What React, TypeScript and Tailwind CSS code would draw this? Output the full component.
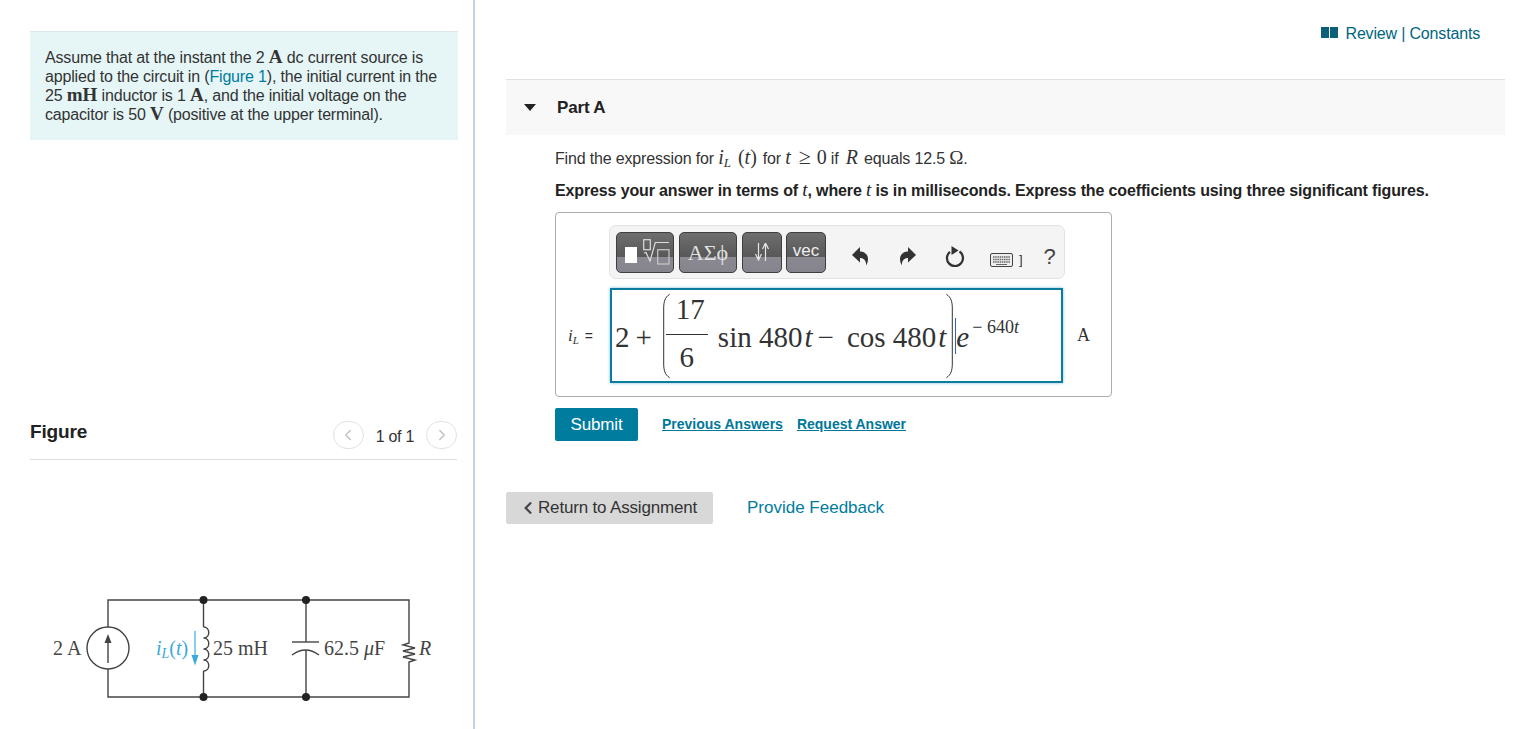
import React from 'react';
import { FaChevronLeft } from 'react-icons/fa';
import { ChevronLeft, ChevronRight } from 'lucide-react';

const M = ({ children, b }: { children: React.ReactNode; b?: boolean }) => (
  <span className={`font-['Liberation_Serif',serif] text-[19px] leading-[0] tracking-normal ${b ? 'font-bold' : ''}`}>{children}</span>
);

const I = ({ children, className }: { children: React.ReactNode; className?: string }) => (
  <span className={`font-['Liberation_Serif',serif] text-[20px] italic leading-[0] tracking-normal ${className ?? ''}`}>{children}</span>
);

function Circuit() {
  const ink = '#444';
  const serif = "'Liberation Serif', serif";
  return (
    <svg viewBox="0 0 420 130" width={420} height={130} className="block tracking-normal">
      <path d="M78 47V20H379V63l-6 2l12 3l-12 3l12 3l-12 3l12 3l-6 2V117H78V89" fill="none" stroke={ink} strokeWidth="1.400" />
      <circle cx="78" cy="68" r="21" fill="#fff" stroke={ink} strokeWidth="1.400" />
      <path d="M78 83V59" stroke={ink} strokeWidth="1.400" />
      <path d="M78 54L74.500 63H81.500Z" fill={ink} />
      <path d="M173.500 20V47M173.500 91V117" stroke={ink} strokeWidth="1.400" />
      <path d="M173.500 47c7 0 7 11 0 11c7 0 7 11 0 11c7 0 7 11 0 11c7 0 7 11 0 11" fill="none" stroke={ink} strokeWidth="1.400" />
      <path d="M276 20V62M276 70V117" stroke={ink} strokeWidth="1.400" />
      <path d="M262 62H289" stroke={ink} strokeWidth="1.400" />
      <path d="M262 75Q275.500 65 289 75" fill="none" stroke={ink} strokeWidth="1.400" />
      <circle cx="173.500" cy="20" r="4" fill="#222" />
      <circle cx="276" cy="20" r="4" fill="#222" />
      <circle cx="173.500" cy="117" r="4" fill="#222" />
      <circle cx="276" cy="117" r="4" fill="#222" />
      <path d="M165 51V77" stroke="#3aa9dc" strokeWidth="1.200" />
      <path d="M165 85.500L161.500 75H168.500Z" fill="#3aa9dc" />
      <g fontFamily={serif} fontSize="20" fill={ink}>
        <text x="23" y="75">2 A</text>
        <text x="183" y="75">25 mH</text>
        <text x="294" y="75">62.5 <tspan fontStyle="italic">μ</tspan>F</text>
        <text x="389" y="75" fontStyle="italic">R</text>
      </g>
      <text x="126" y="75" fontFamily={serif} fontSize="20" fontStyle="italic" fill="#3aa9dc">
        i<tspan fontSize="14" dy="3">L</tspan><tspan dy="-3" fontStyle="normal">(</tspan>t<tspan fontStyle="normal">)</tspan>
      </text>
    </svg>
  );
}

function ToolButton({ w, children }: { w: string; children: React.ReactNode }) {
  return (
    <div className={`${w} relative flex h-[41px] items-center justify-center overflow-hidden rounded-[5px] border border-[#3f3f3f] bg-[linear-gradient(#6e6e6e_0,#585858_61%,#8b8a92_62%,#85848c_100%)]`}>
      {children}
    </div>
  );
}

function Paren({ flip }: { flip?: boolean }) {
  return (
    <svg viewBox="0 0 7 84" width={7} height={84} className={`shrink-0 ${flip ? '-scale-x-100' : ''}`}>
      <path d="M6.500 .5C2 3 .7 8 .7 14V70C.7 76 2 81 6.500 83.500" fill="none" stroke="#333" strokeWidth="1" />
    </svg>
  );
}

function ArrowIcon({ flip }: { flip?: boolean }) {
  return (
    <svg viewBox="0 0 16 19" width={16} height={19} className={`shrink-0 ${flip ? '-scale-x-100' : ''}`}>
      <path d="M0 8L8 0V4.500C13 4.500 16 8 16 12C16 15 15 17 14 18.500C14.500 14 12 11 8 11V15.500Z" fill="#333" />
    </svg>
  );
}

export default function App() {
  return (
    <div className="flex h-[729px] w-[1524px] overflow-hidden bg-white font-['Liberation_Sans',Arial,sans-serif] text-[16px] tracking-[-0.17px] text-[#333]">
      {/* left panel */}
      <div className="h-full w-[475px] shrink-0 border-r-2 border-[#c3d2e2] pl-[30px] pr-[15px] pt-[31px]">
        <div className="h-[109px] whitespace-nowrap border-t border-[#dce5ea] bg-[#e6f6f7] pl-[15px] pt-[16px] text-[16px] leading-[19px]">
          Assume that at the instant the 2 <M b>A</M> dc current source is<br />
          applied to the circuit in (<span className="text-[#007c9e]">Figure 1</span>), the initial current in the<br />
          25 <M b>mH</M> inductor is 1 <M b>A</M>, and the initial voltage on the<br />
          capacitor is 50 <M b>V</M> (positive at the upper terminal).
        </div>

        <div className="mt-[262px] flex h-[58px] w-[427px] items-center justify-between border-b border-[#ddd] pt-[9px]">
          <span className="-mt-[6px] text-[19px] font-bold text-[#222]">Figure</span>
          <div className="flex items-center text-[16px]">
            <span className="flex h-[28px] w-[31px] items-center justify-center rounded-full border border-[#e2e2e2] text-[#c2c2c2]">
              <ChevronLeft size={18} />
            </span>
            <span className="mx-[12px] mt-[4px] tracking-[-0.3px]">1 of 1</span>
            <span className="flex h-[28px] w-[31px] items-center justify-center rounded-full border border-[#e2e2e2] text-[#c2c2c2]">
              <ChevronRight size={18} />
            </span>
          </div>
        </div>

        <div className="mt-[120px]">
          <Circuit />
        </div>
      </div>

      {/* right panel */}
      <div className="ml-[31px] w-[999px] shrink-0">
        <div className="flex h-[79px] items-start justify-end pr-[25px] pt-[24px] leading-[19px] text-[#00667f]">
          <svg viewBox="0 0 17 11" width={17} height={11} className="mr-[8px] mt-[3px]">
            <path d="M0 0H8V11H0ZM9 0H17V11H9Z" fill="#0b5f78" />
          </svg>
          Review | Constants
        </div>

        <div className="flex h-[56px] items-center border-t border-[#e0e0e0] bg-[#f8f8f8] text-[#222]">
          <span className="ml-[18px] h-0 w-0 border-x-[6.500px] border-t-[7px] border-x-transparent border-t-[#222]" />
          <span className="ml-[21px] text-[17px] font-bold">Part A</span>
        </div>

        <div className="pl-[49px]">
          <div className="mt-[12px] h-[24px] whitespace-nowrap leading-[24px]">
            Find the expression for <I>i<sub className="text-[13px]">L</sub></I>
            <span className="ml-[7px] font-['Liberation_Serif',serif] text-[20px] leading-[0] tracking-normal">(<i>t</i>)</span>
            <span className="ml-[6px]">for</span> <I>t</I>
            <span className="ml-[8px] font-['Liberation_Serif',serif] text-[22px] leading-[0]">≥</span>
            <span className="ml-[6px] font-['Liberation_Serif',serif] text-[20px] leading-[0]">0</span> if <I className="ml-[3px]">R</I>
            <span className="ml-[6px]">equals 12.5</span> <M>Ω</M>.
          </div>
          <div className="mt-[8px] h-[24px] whitespace-nowrap font-bold leading-[24px] tracking-[-0.135px] text-[#222]">
            Express your answer in terms of <span className="font-['Liberation_Serif',serif] text-[19px] font-normal italic leading-[0]">t</span>, where <span className="font-['Liberation_Serif',serif] text-[19px] font-normal italic leading-[0]">t</span> is in milliseconds. Express the coefficients using three significant figures.
          </div>

          {/* answer box */}
          <div className="mt-[9px] h-[185px] w-[557px] rounded-[4px] border border-[#acacac] pl-[53px] pt-[12px]">
            <div className="flex h-[54px] w-[456px] items-center rounded-[7px] border border-[#e2e2e2] bg-[#f4f4f4] pl-[6px]">
              <div className="flex gap-[5px]">
                <ToolButton w="w-[58px]">
                  <span className="absolute left-[8px] top-[14px] h-[16px] w-[12px] bg-white" />
                  <svg viewBox="0 0 27 26" width={27} height={26} className="absolute left-[26px] top-[6px]" fill="none" stroke="#dcdcdc" strokeWidth="1.200">
                    <rect x=".7" y=".7" width="6.600" height="10" />
                    <path d="M1 14L3 13.500L7 22L12.300 3.500H26" />
                    <rect x="14.700" y="10.700" width="11.300" height="14.300" stroke="#c8c8c8" />
                  </svg>
                </ToolButton>
                <ToolButton w="w-[58px]">
                  <span className="font-['Liberation_Serif',serif] text-[22px] tracking-normal text-[#e0e0e0]">ΑΣϕ</span>
                </ToolButton>
                <ToolButton w="w-[40px]">
                  <svg viewBox="0 0 16 18" width={16} height={18} fill="none" stroke="#e4e4e4" strokeWidth="1.200">
                    <path d="M4.500 0V16M1.500 11L4.500 17L7.500 11M11.500 18V2M8.500 6L11.500 0L14.500 6" />
                  </svg>
                </ToolButton>
                <div className="-ml-[1px]">
                  <ToolButton w="w-[40px]">
                    <span className="-mt-[3px] text-[17px] tracking-normal text-[#eee]">vec</span>
                  </ToolButton>
                </div>
              </div>
              <div className="ml-[26px] mt-[9px]"><ArrowIcon /></div>
              <div className="ml-[32px] mt-[9px]"><ArrowIcon flip /></div>
              <svg viewBox="0 0 20 21" width={20} height={21} className="ml-[29px] mt-[9px]" fill="none">
                <path d="M14.500 5.500A8 8 0 1 1 5 5.800" stroke="#333" strokeWidth="2.300" />
                <path d="M6.500 0L13.500 4.500L6.500 9Z" fill="#333" />
              </svg>
              <svg viewBox="0 0 23 14" width={23} height={14} className="ml-[25px] mt-[15px]" fill="none">
                <rect x=".5" y=".5" width="22" height="13" rx="1.500" fill="#eee" stroke="#444" />
                <path d="M3 4h17M3 6.500h17M3 9h17" stroke="#666" strokeWidth="1.300" strokeDasharray="1.500 .7" />
                <path d="M6 11.500h11" stroke="#666" />
              </svg>
              <span className="ml-[6px] mt-[15px] text-[13px] leading-none">]</span>
              <span className="ml-[21px] mt-[9px] text-[22px] leading-none text-[#444]">?</span>
            </div>

            <div className="-ml-[41px] mt-[9px] flex w-[535px] items-center tracking-normal">
              <div className="w-[42px] shrink-0 whitespace-nowrap text-[14px] text-[#333]">
                <span className="font-['Liberation_Serif',serif] text-[17px] italic">i<sub className="text-[11px]">L</sub></span>
                <span className="ml-[6px]">=</span>
              </div>
              <div className="flex h-[95px] w-[453px] shrink-0 items-center whitespace-nowrap border-2 border-[#0b7c9e] pl-[3px] font-['Liberation_Serif',serif] text-[29px] text-[#333] shadow-[0_0_3px_#7fc0d4]">
                <span className="mt-[5px]">2</span>
                <span className="ml-[6px] mt-[5px]">+</span>
                <span className="ml-[11px]"><Paren /></span>
                <div className="-ml-[4px] -mt-[2px] flex w-[42px] flex-col text-center">
                  <span className="h-[45px] border-b border-[#333] pl-[7px] leading-[38px]">17</span>
                  <span className="h-[45px] leading-[44px]">6</span>
                </div>
                <span className="ml-[10px] mt-[5px]">sin 480<i className="mx-[2px]">t</i></span>
                <span className="ml-[3px] mt-[5px]">−</span>
                <span className="ml-[13px] mt-[5px]">cos 480<i className="ml-[2px]">t</i></span>
                <Paren flip />
                <span className="ml-[2px] h-[36px] w-px bg-[#2a62c8]" />
                <i className="mt-[5px]">e</i>
                <span className="-mt-[16px] ml-[3px] text-[18px]">− 640<i>t</i></span>
              </div>
              <div className="ml-[14px] font-['Liberation_Serif',serif] text-[18px]">A</div>
            </div>
          </div>

          <div className="mt-[11px] flex items-center">
            <div className="flex h-[33px] w-[83px] items-center justify-center rounded-[2px] bg-[#007c9e] text-[17px] text-white">Submit</div>
            <span className="ml-[24px] text-[14px] font-bold tracking-normal text-[#00789a] underline">Previous Answers</span>
            <span className="ml-[14px] text-[14px] font-bold tracking-normal text-[#00789a] underline">Request Answer</span>
          </div>
        </div>

        <div className="mt-[51px] flex items-center">
          <div className="flex h-[32px] w-[207px] items-center rounded-[2px] bg-[#d8d8d8] pl-[15px] text-[17px] text-[#333]">
            <FaChevronLeft size={14} className="mr-[3px] text-[#444]" />
            Return to Assignment
          </div>
          <span className="ml-[34px] text-[17px] tracking-normal text-[#007c9e]">Provide Feedback</span>
        </div>
      </div>
    </div>
  );
}
